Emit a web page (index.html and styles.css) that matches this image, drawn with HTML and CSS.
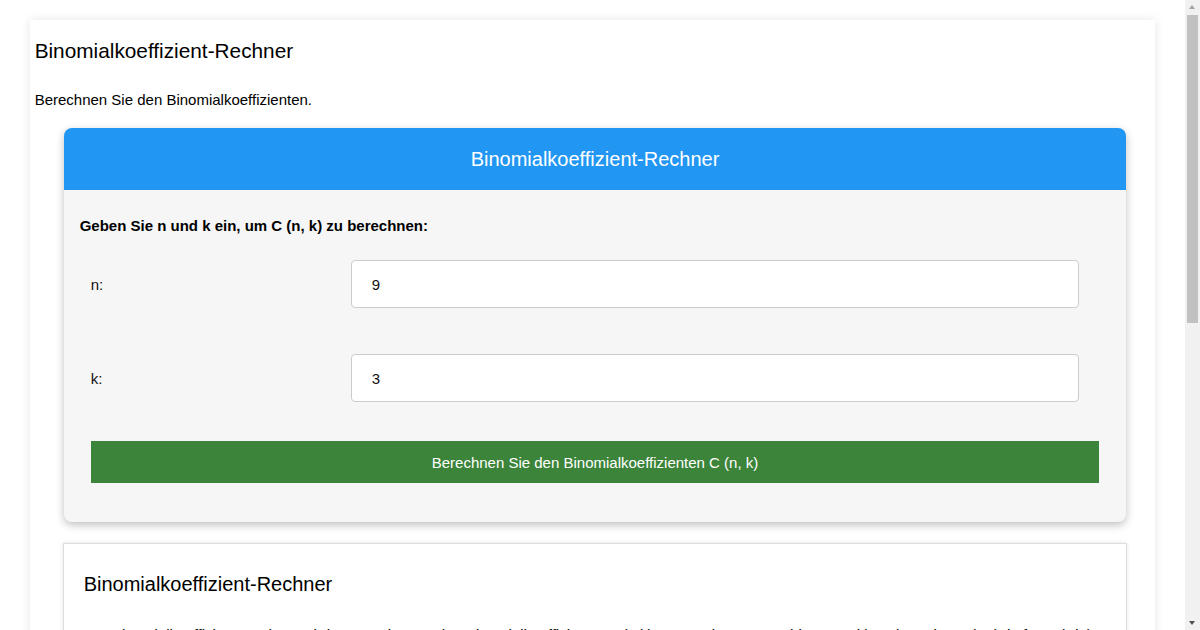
FILE: index.html
```html
<!DOCTYPE html>
<html lang="de">
<head>
<meta charset="utf-8">
<title>Binomialkoeffizient-Rechner</title>
<link rel="stylesheet" href="styles.css">
</head>
<body>
<div class="page">
  <h1 class="page-title">Binomialkoeffizient-Rechner</h1>
  <p class="page-intro">Berechnen Sie den Binomialkoeffizienten.</p>

  <!-- Rechner -->
  <div class="calc">
    <div class="calc-head">Binomialkoeffizient-Rechner</div>
    <div class="calc-body">
      <p class="calc-prompt">Geben Sie n und k ein, um C (n, k) zu berechnen:</p>
      <div class="field">
        <label for="n">n:</label>
        <input id="n" type="text" value="9">
      </div>
      <div class="field field-last">
        <label for="k">k:</label>
        <input id="k" type="text" value="3">
      </div>
      <button class="calc-btn" type="button">Berechnen Sie den Binomialkoeffizienten C (n, k)</button>
    </div>
  </div>

  <!-- Erklärung -->
  <div class="info">
    <h2>Binomialkoeffizient-Rechner</h2>
    <p>Der Binomialkoeffizient-Rechner wird verwendet, um den Binomialkoeffizienten C(n,k) von zwei ganzen Zahlen n und k zu berechnen (Schritt für Schritt).</p>
    <p>Der Binomialkoeffizient gibt an, auf wie viele Arten man k Elemente aus einer Menge von n Elementen auswählen kann, ohne die Reihenfolge zu beachten.</p>
    <p>C(n, k) = n! / (k! · (n − k)!)</p>
  </div>
</div>

<!-- browser scrollbar as seen in the screenshot -->
<div class="scrollbar">
  <span class="sb-arrow sb-up"></span>
  <span class="sb-thumb"></span>
  <span class="sb-arrow sb-down"></span>
</div>
</body>
</html>
```

FILE: styles.css
```css
body {
  margin: 0 15px 0 0;
  background: #fff;
  font-family: "Liberation Sans", Arial, sans-serif;
  font-size: 15px;
  color: #000;
}
/* outer white sheet */
.page {
  width: 95%;
  margin: 20px auto;
  padding: 5px 5px 30px;
  box-sizing: border-box;
  background: #fff;
  box-shadow: 0 0 10px rgba(0, 0, 0, 0.1);
}
.page-title {
  font-size: 20.8px;
  font-weight: normal;
  margin: 14px 0 28px;
}
.page-intro {
  margin: 0 0 20px;
}
/* calculator card */
.calc {
  margin: 0 24px 0 29px;
  border-radius: 8px;
  overflow: hidden;
  background: #f6f6f6;
  box-shadow: 0 3px 8px rgba(0, 0, 0, 0.25);
}
.calc-head {
  background: #2196f3;
  color: #fff;
  text-align: center;
  font-size: 20px;
  line-height: 23px;
  padding: 20px 0 19px;
}
.calc-body {
  padding: 27px 16px 39px;
}
.calc-prompt {
  font-weight: bold;
  margin: 0 0 26px;
  line-height: 17px;
}
.field {
  display: grid;
  grid-template-columns: 260px 728px;
  align-items: center;
  padding: 0 11px;
  margin-bottom: 46px;
}
.field-last {
  margin-bottom: 39px;
}
.field label {
  color: #111;
}
.field input {
  height: 48px;
  box-sizing: border-box;
  padding: 0 20px;
  border: 1px solid #ccc;
  border-radius: 4px;
  background: #fff;
  font-family: inherit;
  font-size: 15px;
  color: #111;
}
.calc-btn {
  display: block;
  width: calc(100% - 22px);
  margin: 0 11px;
  height: 42px;
  border: none;
  background: #3b843a;
  color: #fff;
  font-family: inherit;
  font-size: 15px;
}
/* explanation box */
.info {
  margin: 21px 23px 0 28px;
  padding: 20px;
  border: 1px solid #ddd;
  background: #fff;
  box-shadow: 0 0 4px rgba(0, 0, 0, 0.1);
}
.info h2 {
  font-size: 20px;
  font-weight: normal;
  margin: 9px 0 27px;
}
.info p {
  line-height: 1.6;
  margin: 0 0 15px;
}
/* fake window scrollbar */
.scrollbar {
  position: fixed;
  top: 0;
  right: 0;
  width: 15px;
  height: 100%;
  background: #f1f1f1;
}
.sb-thumb {
  position: absolute;
  top: 15px;
  left: 2px;
  width: 11px;
  height: 308px;
  background: #c1c1c1;
}
.sb-arrow {
  position: absolute;
  left: 4px;
  width: 0;
  height: 0;
  border-left: 3.5px solid transparent;
  border-right: 3.5px solid transparent;
}
.sb-up {
  top: 5px;
  border-bottom: 4px solid #a3a3a3;
}
.sb-down {
  bottom: 5px;
  border-top: 4px solid #505050;
}
```
